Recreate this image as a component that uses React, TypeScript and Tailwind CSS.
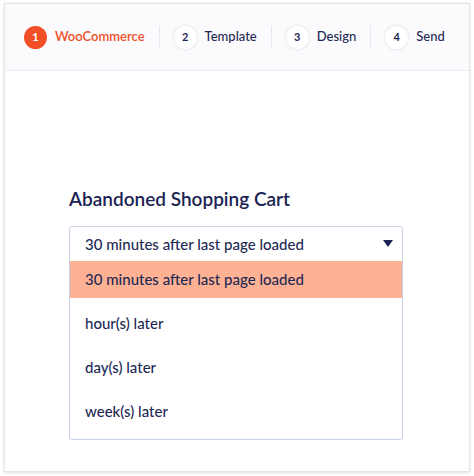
const steps = [
  { n: 1, label: 'WooCommerce', active: true },
  { n: 2, label: 'Template' },
  { n: 3, label: 'Design' },
  { n: 4, label: 'Send' },
]

const options = ['hour(s) later', 'day(s) later', 'week(s) later']

export default function App() {
  return (
    <div className="h-[476px] w-[474px] bg-white pl-[4px] pr-[4px] pt-[3px] pb-[4px] [font-family:Lato,sans-serif]">
      <div className="flex h-full flex-col border border-[#e2e4e9] bg-white shadow-[0_1px_3px_rgba(0,0,0,0.12)]">
        {/* Steps */}
        <div className="flex h-[67px] items-center border-b border-[#e8eaf0] bg-[#fbfbfd] pl-[19px]">
          {steps.map((s, i) => (
            <div key={s.n} className="flex items-center">
              {i > 0 && <div className="mx-[14px] h-[22px] w-px bg-[#e6e8ee]" />}
              <div
                className={
                  s.active
                    ? 'flex h-[23px] w-[23px] items-center justify-center rounded-full bg-[#f24f26] text-[11px] font-bold text-white'
                    : 'flex h-[23px] w-[23px] items-center justify-center rounded-full bg-white text-[11px] font-bold text-[#1e2a55] shadow-[0_0_3px_rgba(40,50,90,0.18)]'
                }
              >
                {s.n}
              </div>
              <span
                className={
                  s.active
                    ? 'ml-[8px] text-[13px] font-semibold text-[#f0502b]'
                    : 'ml-[8px] text-[13px] font-medium text-[#1e2a55]'
                }
              >
                {s.label}
              </span>
            </div>
          ))}
        </div>

        {/* Content */}
        <div className="flex flex-col pl-[64px] pt-[116px]">
          <h2 className="text-[19px] leading-[24px] font-semibold text-[#1b2452]">Abandoned Shopping Cart</h2>
          <div className="mt-[15px] w-[334px] overflow-hidden rounded-[3px] border border-[#c8d2e6] bg-white text-[15px] font-medium text-[#1e2a55]">
            <div className="flex h-[34px] items-center justify-between pl-[15px] pr-[9px]">
              <span>30 minutes after last page loaded</span>
              <svg width="10" height="8" viewBox="0 0 10 8">
                <path d="M0 0h10L5 7z" fill="#1b2452" />
              </svg>
            </div>
            <div className="flex h-[37px] items-center bg-[#ffb193] pl-[15px]">30 minutes after last page loaded</div>
            <div className="flex flex-col pt-[3px] pb-[6px]">
              {options.map((o) => (
                <div key={o} className="flex h-[44px] items-center pl-[15px]">
                  {o}
                </div>
              ))}
            </div>
          </div>
        </div>
      </div>
    </div>
  )
}
